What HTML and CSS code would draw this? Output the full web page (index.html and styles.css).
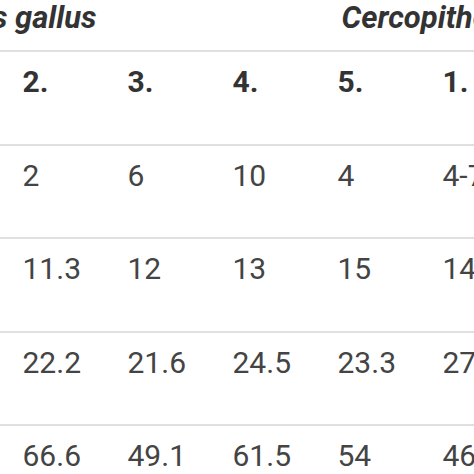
FILE: index.html
```html
<!DOCTYPE html>
<html>
<head>
<meta charset="utf-8">
<link rel="stylesheet" href="styles.css">
</head>
<body>
<div class="table">
  <div class="row group-row">
    <div class="group group-a">Gallus gallus</div>
    <div class="group group-b">Cercopithecus aethiops</div>
  </div>
  <div class="row head-row">
    <div class="cell">1.</div>
    <div class="cell">2.</div>
    <div class="cell">3.</div>
    <div class="cell">4.</div>
    <div class="cell">5.</div>
    <div class="cell">1.</div>
  </div>
  <div class="row">
    <div class="cell">3</div>
    <div class="cell">2</div>
    <div class="cell">6</div>
    <div class="cell">10</div>
    <div class="cell">4</div>
    <div class="cell">4-7</div>
  </div>
  <div class="row">
    <div class="cell">10</div>
    <div class="cell">11.3</div>
    <div class="cell">12</div>
    <div class="cell">13</div>
    <div class="cell">15</div>
    <div class="cell">14</div>
  </div>
  <div class="row">
    <div class="cell">20</div>
    <div class="cell">22.2</div>
    <div class="cell">21.6</div>
    <div class="cell">24.5</div>
    <div class="cell">23.3</div>
    <div class="cell">27.4</div>
  </div>
  <div class="row">
    <div class="cell">60</div>
    <div class="cell">66.6</div>
    <div class="cell">49.1</div>
    <div class="cell">61.5</div>
    <div class="cell">54</div>
    <div class="cell">46.2</div>
  </div>
</div>
</body>
</html>
```

FILE: styles.css
```css
html, body {
  margin: 0;
  padding: 0;
  background: #ffffff;
  overflow: hidden;
  width: 474px;
  height: 474px;
}

.table {
  margin-left: -82.5px;
  font-family: Roboto, "Liberation Sans", sans-serif;
  font-size: 30px;
  line-height: 36px;
  color: #444444;
}

.row {
  display: grid;
  grid-template-columns: repeat(6, 105px);
  border-top: 2px solid #e0e0e0;
  padding: 12px 0 43.5px;
  white-space: nowrap;
}

.group-row {
  border-top: none;
  padding: 0 0 14px;
  font-size: 31px;
  font-style: italic;
  font-weight: 700;
  color: #333333;
}

.group-a {
  grid-column: 1 / 3;
  text-align: right;
  padding-right: 31px;
}

.group-b {
  grid-column: 5 / 7;
  padding-left: 4px;
}

.head-row {
  font-weight: 700;
  color: #333333;
}

.cell {
  overflow: visible;
}
```
